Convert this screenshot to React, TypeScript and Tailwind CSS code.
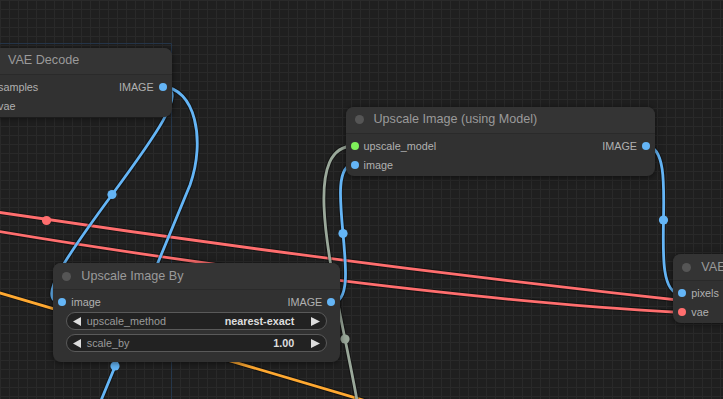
import React from "react";

type Slot = { name: string; color: string };
type Widget = { label: string; value: string };

const LeftArrow = () => (
  <svg width="8" height="9" viewBox="0 0 8 9" className="shrink-0">
    <polygon points="8,0 8,9 0,4.5" fill="#dddddd" />
  </svg>
);
const RightArrow = () => (
  <svg width="9" height="9" viewBox="0 0 9 9" className="shrink-0">
    <polygon points="0,0 0,9 9,4.5" fill="#dddddd" />
  </svg>
);

function GraphNode({
  left,
  top,
  width,
  title,
  inputs,
  outputs,
  widgets = [],
  bottomPad = 1,
}: {
  left: number;
  top: number;
  width: number;
  title: string;
  inputs: Slot[];
  outputs: Slot[];
  widgets?: Widget[];
  bottomPad?: number;
}) {
  const rows = Math.max(inputs.length, outputs.length);
  return (
    <div
      className="absolute rounded-[8px] bg-[#313131] shadow-[0_1px_6px_rgba(0,0,0,0.55)] overflow-hidden"
      style={{ left, top, width, paddingBottom: bottomPad }}
    >
      <div className="h-[27px] flex items-center pl-[9px] bg-[#343434] border-b border-[#2a2a2a]">
        <div className="w-[9px] h-[9px] rounded-full bg-[#555555] shrink-0" />
        <span className="ml-[10px] text-[12.6px] text-[#9a9a9a] whitespace-nowrap leading-none">
          {title}
        </span>
      </div>
      <div className="pt-[3px] flex flex-col">
        {Array.from({ length: rows }).map((_, i) => (
          <div key={i} className="h-[19px] flex items-center justify-between">
            <div className="flex items-center pl-[5px] gap-[5px]">
              {inputs[i] && (
                <>
                  <div
                    className="w-[8px] h-[8px] rounded-full shrink-0"
                    style={{ backgroundColor: inputs[i].color }}
                  />
                  <span className="text-[10.8px] text-[#b0b0b0] leading-none whitespace-nowrap">
                    {inputs[i].name}
                  </span>
                </>
              )}
            </div>
            <div className="flex items-center pr-[5px] gap-[5px]">
              {outputs[i] && (
                <>
                  <span className="text-[10.8px] text-[#b0b0b0] leading-none whitespace-nowrap">
                    {outputs[i].name}
                  </span>
                  <div
                    className="w-[8px] h-[8px] rounded-full shrink-0"
                    style={{ backgroundColor: outputs[i].color }}
                  />
                </>
              )}
            </div>
          </div>
        ))}
        {widgets.length > 0 && (
          <div className="flex flex-col gap-[4px] mt-[0px]">
            {widgets.map((w) => (
              <div
                key={w.label}
                className="mx-[13px] h-[18px] rounded-full border border-[#5a5a5a] bg-[#222222] flex items-center pl-[6px] pr-[6.5px]"
              >
                <LeftArrow />
                <span className="ml-[5.5px] text-[10.8px] text-[#9a9a9a] leading-none whitespace-nowrap">
                  {w.label}
                </span>
                <span className="flex-1" />
                <span className="mr-[16.5px] text-[10.8px] font-bold text-[#dddddd] leading-none whitespace-nowrap">
                  {w.value}
                </span>
                <RightArrow />
              </div>
            ))}
          </div>
        )}
      </div>
    </div>
  );
}

const BLUE = "#64b5f6";
const RED = "#ff6e6e";
const ORANGE = "#ffa931";
const GREENLINK = "#9aa89a";

function Link({ d, color }: { d: string; color: string }) {
  return (
    <g>
      <path d={d} stroke="rgba(0,0,0,0.35)" strokeWidth={5} fill="none" />
      <path d={d} stroke={color} strokeWidth={2.8} fill="none" />
    </g>
  );
}

function Dot({ x, y, color }: { x: number; y: number; color: string }) {
  return <circle cx={x} cy={y} r={4.6} fill={color} />;
}

export default function App() {
  return (
    <div
      className="relative w-[723px] h-[399px] overflow-hidden bg-[#1f1f1f]"
      style={{ fontFamily: '"Liberation Sans", Arial, sans-serif' }}
    >
      <svg className="absolute inset-0" width="723" height="399">
        <defs>
          <pattern id="grid" width="9" height="9" patternUnits="userSpaceOnUse">
            <path d="M0.5 0 V9 M0 0.5 H9" stroke="#292929" strokeWidth="1" fill="none" />
          </pattern>
        </defs>
        <rect width="723" height="399" fill="url(#grid)" />
        <path d="M0 43.5 H171.5 V399" stroke="#25364a" strokeWidth="1" fill="none" />

        <Link d="M-10 290 L400 411" color={ORANGE} />
        <Link d="M-10 211 C230 247, 480 279, 723 305" color={RED} />
        <Dot x={46.5} y={220.5} color={RED} />
        <Link d="M-10 230 C150 257, 450 300, 682 312.5" color={RED} />
        <Link d="M162 87 C221 87, 3 302.5, 62 302.5" color={BLUE} />
        <Dot x={112} y={194.5} color={BLUE} />
        <Link d="M162 87 C195 87, 206 140, 190 185 L95 415" color={BLUE} />
        <Dot x={115} y={366} color={BLUE} />
        <Link d="M336 532 C432.6 532, 257.4 146, 354 146" color={GREENLINK} />
        <Dot x={345} y={339} color={GREENLINK} />
        <Link d="M332 302.5 C367 302.5, 319 164.5, 354 164.5" color={BLUE} />
        <Dot x={343} y={233.5} color={BLUE} />
        <Link d="M646 146 C684 146, 643 294, 681 294" color={BLUE} />
        <Dot x={663.5} y={220} color={BLUE} />
      </svg>

      <GraphNode
        left={-20}
        top={47.5}
        width={191.7}
        title="VAE Decode"
        inputs={[
          { name: "samples", color: "#ff9cf9" },
          { name: "vae", color: RED },
        ]}
        outputs={[{ name: "IMAGE", color: BLUE }]}
      />
      <GraphNode
        left={345.5}
        top={106.5}
        width={309.5}
        title="Upscale Image (using Model)"
        inputs={[
          { name: "upscale_model", color: "#7ff05a" },
          { name: "image", color: BLUE },
        ]}
        outputs={[{ name: "IMAGE", color: BLUE }]}
      />
      <GraphNode
        left={53.3}
        top={263}
        width={287}
        title="Upscale Image By"
        inputs={[{ name: "image", color: BLUE }]}
        outputs={[{ name: "IMAGE", color: BLUE }]}
        widgets={[
          { label: "upscale_method", value: "nearest-exact" },
          { label: "scale_by", value: "1.00" },
        ]}
        bottomPad={10}
      />
      <GraphNode
        left={673.3}
        top={254}
        width={200}
        title="VAE Decode"
        inputs={[
          { name: "pixels", color: BLUE },
          { name: "vae", color: RED },
        ]}
        outputs={[]}
      />
    </div>
  );
}
